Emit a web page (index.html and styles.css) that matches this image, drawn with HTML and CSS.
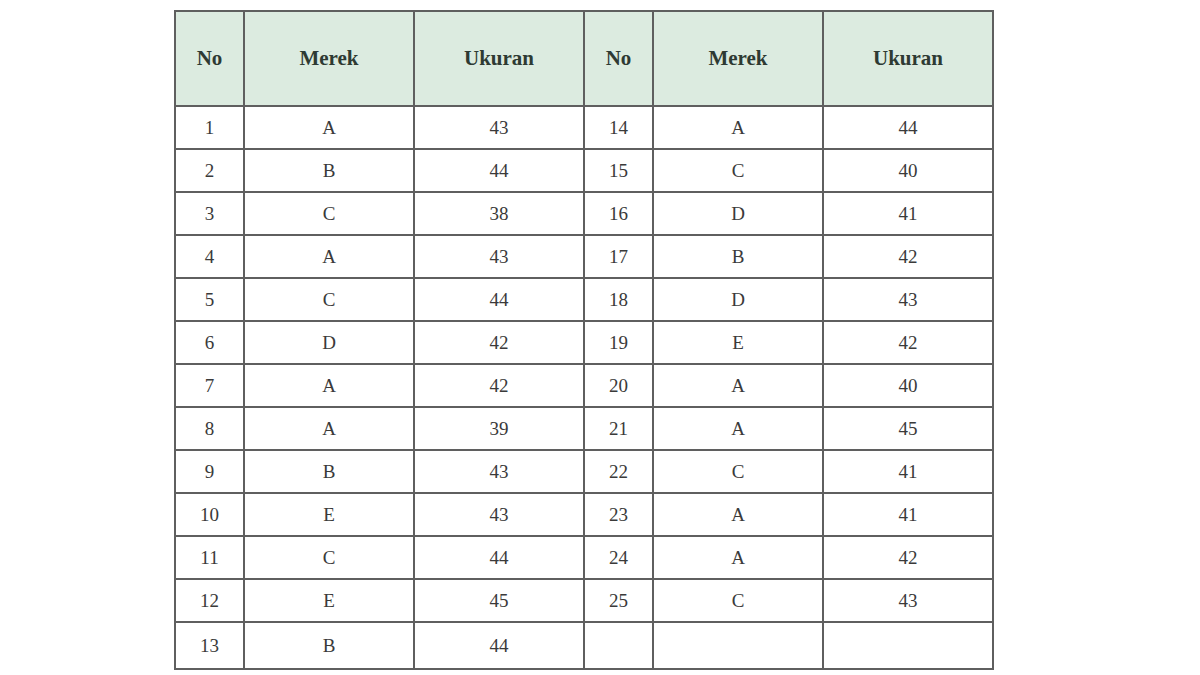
FILE: index.html
```html
<!DOCTYPE html>
<html>
<head>
<meta charset="utf-8">
<link rel="stylesheet" href="styles.css">
</head>
<body>
<div class="page">
<table class="data">
<colgroup>
<col class="c-no"><col class="c-wide"><col class="c-wide"><col class="c-no"><col class="c-wide"><col class="c-wide">
</colgroup>
<thead>
<tr><th>No</th><th>Merek</th><th>Ukuran</th><th>No</th><th>Merek</th><th>Ukuran</th></tr>
</thead>
<tbody>
<tr><td>1</td><td>A</td><td>43</td><td>14</td><td>A</td><td>44</td></tr>
<tr><td>2</td><td>B</td><td>44</td><td>15</td><td>C</td><td>40</td></tr>
<tr><td>3</td><td>C</td><td>38</td><td>16</td><td>D</td><td>41</td></tr>
<tr><td>4</td><td>A</td><td>43</td><td>17</td><td>B</td><td>42</td></tr>
<tr><td>5</td><td>C</td><td>44</td><td>18</td><td>D</td><td>43</td></tr>
<tr><td>6</td><td>D</td><td>42</td><td>19</td><td>E</td><td>42</td></tr>
<tr><td>7</td><td>A</td><td>42</td><td>20</td><td>A</td><td>40</td></tr>
<tr><td>8</td><td>A</td><td>39</td><td>21</td><td>A</td><td>45</td></tr>
<tr><td>9</td><td>B</td><td>43</td><td>22</td><td>C</td><td>41</td></tr>
<tr><td>10</td><td>E</td><td>43</td><td>23</td><td>A</td><td>41</td></tr>
<tr><td>11</td><td>C</td><td>44</td><td>24</td><td>A</td><td>42</td></tr>
<tr><td>12</td><td>E</td><td>45</td><td>25</td><td>C</td><td>43</td></tr>
<tr class="last"><td>13</td><td>B</td><td>44</td><td></td><td></td><td></td></tr>
</tbody>
</table>
</div>
</body>
</html>
```
FILE: styles.css
```css
html, body {
  margin: 0;
  padding: 0;
  background: #ffffff;
}
.page {
  padding: 10px 0 0 174px;
}
.data {
  border-collapse: collapse;
  table-layout: fixed;
  width: 819px;
  font-family: "Liberation Serif", "Times New Roman", serif;
  color: #3a3a3a;
}
.c-no { width: 69px; }
.c-wide { width: 170px; }
.data th, .data td {
  border: 2px solid #5f5f5f;
  text-align: center;
  padding: 0;
}
.data th {
  height: 93px;
  background: #dcebe0;
  font-size: 21px;
  font-weight: bold;
  color: #2e3a33;
}
.data td {
  height: 41px;
  font-size: 19px;
}
.data tr.last td {
  height: 45px;
}
```
